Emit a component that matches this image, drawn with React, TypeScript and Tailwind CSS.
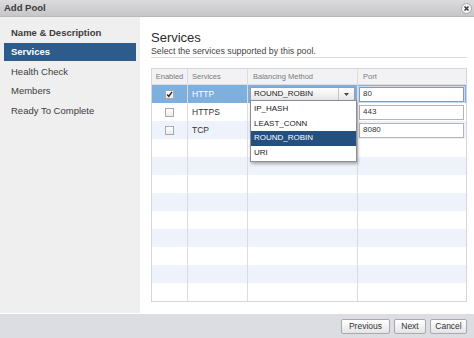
const sideItems = ["Name & Description", "Services", "Health Check", "Members", "Ready To Complete"];

const services = [
  { name: "HTTP", port: "80", enabled: true },
  { name: "HTTPS", port: "443", enabled: false },
  { name: "TCP", port: "8080", enabled: false },
];

const methods = ["IP_HASH", "LEAST_CONN", "ROUND_ROBIN", "URI"];

const Checkbox = ({ checked }: { checked: boolean }) => (
  <div className="w-[9px] h-[9px] border border-[#a9a9ad] bg-gradient-to-b from-white to-[#ececee] flex items-center justify-center">
    {checked && (
      <svg width="9" height="9" viewBox="0 0 9 9">
        <path d="M1.5 4.5 L3.6 6.8 L7.8 1.2" stroke="#1d2a3a" strokeWidth="1.8" fill="none" />
      </svg>
    )}
  </div>
);

const App = () => {
  const rows = Array.from({ length: 12 }, (_, i) => services[i]);

  return (
    <div
      className="w-[474px] h-[338px] flex flex-col bg-white text-[#333] overflow-hidden"
      style={{ fontFamily: '"Liberation Sans", Arial, sans-serif' }}
    >
      {/* title bar */}
      <div className="h-[17px] flex items-center justify-between pl-[4px] pr-[2px] bg-gradient-to-b from-[#dcdcde] to-[#c6c6c9] border-b border-[#b9b9bd]">
        <span className="text-[9.5px] font-bold text-[#3a3a3a]">Add Pool</span>
        <svg width="11" height="11" viewBox="0 0 11 11">
          <circle cx="5.5" cy="5.5" r="5" fill="#f4f4f4" stroke="#9a9a9e" strokeWidth="0.8" />
          <path d="M3.5 3.5 L7.5 7.5 M7.5 3.5 L3.5 7.5" stroke="#333" strokeWidth="1.4" />
        </svg>
      </div>

      <div className="flex-1 flex min-h-0">
        {/* sidebar */}
        <div className="w-[140px] bg-[#efefef] pt-[6px] flex flex-col">
          {sideItems.map((item, i) =>
            i === 1 ? (
              <div
                key={item}
                className="h-[18px] mx-[4px] my-[0.75px] pl-[7px] flex items-center bg-[#2c5b8c] text-white font-bold text-[9.5px]"
              >
                {item}
              </div>
            ) : (
              <div
                key={item}
                className={`h-[19.5px] pl-[11px] flex items-center text-[9.5px] text-[#3c3c3c] ${i === 0 ? "font-bold" : ""}`}
              >
                {item}
              </div>
            )
          )}
        </div>

        {/* main pane */}
        <div className="flex-1 pt-[13px] pl-[11px] pr-[7px]">
          <div className="h-[16px] leading-[16px] text-[13px] text-[#2a2a2a]">Services</div>
          <div className="h-[11px] leading-[11px] text-[8.8px] text-[#444]">Select the services supported by this pool.</div>
          <div className="border-t border-[#dcdcdc]" />

          <div className="relative mt-[10px] border border-[#d6d6da]">
            {/* header */}
            <div className="h-[16px] flex bg-[#f2f2f4] text-[7.5px] text-[#7a7a7a] border-b border-[#dedee2]">
              <div className="w-[36px] flex items-center justify-center border-r border-[#dcdce0]">Enabled</div>
              <div className="w-[60px] flex items-center pl-[4px] border-r border-[#dcdce0]">Services</div>
              <div className="w-[110px] flex items-center pl-[5px] border-r border-[#dcdce0]">Balancing Method</div>
              <div className="flex-1 flex items-center pl-[5px]">Port</div>
            </div>

            {rows.map((svc, i) => {
              const selected = i === 0;
              const bg = selected ? "bg-[#7db0dc]" : i % 2 === 0 ? "bg-[#eef2fb]" : "bg-white";
              return (
                <div key={i} className={`h-[18px] flex ${bg}`}>
                  <div className="w-[36px] flex items-center justify-center border-r border-[#dcdce0]">
                    {svc && <Checkbox checked={svc.enabled} />}
                  </div>
                  <div
                    className={`w-[60px] flex items-center pl-[4px] border-r border-[#dcdce0] text-[8.5px] ${selected ? "text-white" : "text-[#333]"}`}
                  >
                    {svc?.name}
                  </div>
                  <div className="w-[110px] flex items-center px-[2px] border-r border-[#dcdce0]">
                    {selected && (
                      <div className="w-full h-[14px] flex items-center border border-[#9c9ca2] bg-gradient-to-b from-white to-[#e6e6e9] text-[8px] text-[#222]">
                        <span className="flex-1 pl-[3px]">ROUND_ROBIN</span>
                        <span className="w-[16px] h-full flex items-center justify-center border-l border-[#c4c4c8]">
                          <svg width="5" height="3" viewBox="0 0 5 3">
                            <path d="M0 0 L5 0 L2.5 3 Z" fill="#444" />
                          </svg>
                        </span>
                      </div>
                    )}
                  </div>
                  <div className="flex-1 flex items-center pl-[1px] pr-[2px]">
                    {svc && (
                      <div
                        className={`w-full h-[15px] flex items-center pl-[3px] bg-white text-[8px] text-[#333] border ${selected ? "border-[#7f9fc2] outline outline-1 outline-[#c9dcef]" : "border-[#b4b4b8]"}`}
                      >
                        {svc.port}
                      </div>
                    )}
                  </div>
                </div>
              );
            })}

            {/* open dropdown list */}
            <div className="absolute left-[98px] top-[31px] w-[107px] bg-white border border-[#8e8e94] shadow-[1px_2px_3px_rgba(0,0,0,0.3)] py-[1px]">
              {methods.map((m) => (
                <div
                  key={m}
                  className={`h-[14.5px] flex items-center pl-[3px] text-[8px] ${m === "ROUND_ROBIN" ? "bg-[#24507f] text-white" : "text-[#222]"}`}
                >
                  {m}
                </div>
              ))}
            </div>
          </div>
        </div>
      </div>

      {/* footer */}
      <div className="h-[25px] flex items-center justify-end gap-[4px] pr-[7px] bg-[#dcdce3] border-t border-white">
        {["Previous", "Next", "Cancel"].map((b) => (
          <button
            key={b}
            className={`h-[15px] flex items-center justify-center rounded-[2px] border border-[#a9a9ae] bg-gradient-to-b from-white to-[#e4e4e6] text-[8.5px] text-[#333] ${b === "Previous" ? "w-[49px]" : b === "Next" ? "w-[32px]" : "w-[37px]"}`}
          >
            {b}
          </button>
        ))}
      </div>
    </div>
  );
};

export default App;
